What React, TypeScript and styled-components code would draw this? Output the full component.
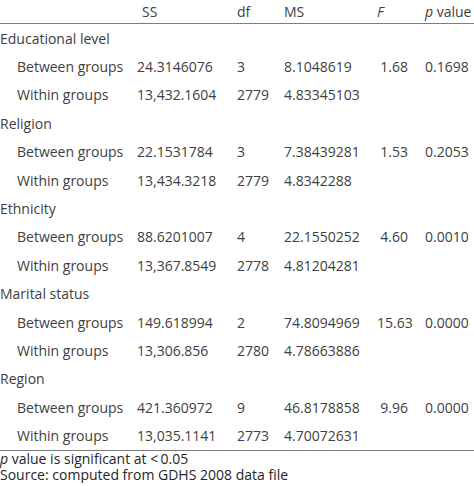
import styled, { createGlobalStyle } from 'styled-components';

const GlobalStyle = createGlobalStyle`
  html, body {
    margin: 0;
    padding: 0;
    background: #ffffff;
  }
  body {
    font-family: 'Open Sans', 'Noto Sans', sans-serif;
    color: #404040;
  }
`;

const Table = styled.div`
  width: 474px;
  font-size: 14px;
`;

const Row = styled.div<{ $head?: boolean; $last?: boolean }>`
  display: grid;
  grid-template-columns: 137px 100px 47px 93px 31px 1fr;
  align-items: center;
  height: ${(p) => (p.$head ? '23px' : '28.4px')};
  border-bottom: ${(p) => (p.$head || p.$last ? '1.5px solid #7d7d7d' : 'none')};
  white-space: nowrap;
`;

const Label = styled.div<{ $indent?: boolean }>`
  padding-left: ${(p) => (p.$indent ? '17px' : '0')};
`;

const Cell = styled.div<{ $right?: boolean; $pad?: number }>`
  text-align: ${(p) => (p.$right ? 'right' : 'left')};
  padding-left: ${(p) => p.$pad ?? 0}px;
`;

const Italic = styled.span`
  font-style: italic;
`;

const Notes = styled.div`
  font-size: 14px;
  line-height: 16px;
  color: #262626;
`;

const Note = styled.p`
  margin: 0;
  white-space: nowrap;
`;

type Group = {
  name: string;
  between: [string, string, string, string, string];
  within: [string, string, string];
};

const groups: Group[] = [
  {
    name: 'Educational level',
    between: ['24.3146076', '3', '8.1048619', '1.68', '0.1698'],
    within: ['13,432.1604', '2779', '4.83345103'],
  },
  {
    name: 'Religion',
    between: ['22.1531784', '3', '7.38439281', '1.53', '0.2053'],
    within: ['13,434.3218', '2779', '4.8342288'],
  },
  {
    name: 'Ethnicity',
    between: ['88.6201007', '4', '22.1550252', '4.60', '0.0010'],
    within: ['13,367.8549', '2778', '4.81204281'],
  },
  {
    name: 'Marital status',
    between: ['149.618994', '2', '74.8094969', '15.63', '0.0000'],
    within: ['13,306.856', '2780', '4.78663886'],
  },
  {
    name: 'Region',
    between: ['421.360972', '9', '46.8178858', '9.96', '0.0000'],
    within: ['13,035.1141', '2773', '4.70072631'],
  },
];

export default function App() {
  return (
    <>
      <GlobalStyle />
      <Table>
        <Row $head>
          <Label />
          <Cell $pad={5}>SS</Cell>
          <Cell>df</Cell>
          <Cell>MS</Cell>
          <Cell>
            <Italic>F</Italic>
          </Cell>
          <Cell $pad={17}>
            <Italic>p</Italic> value
          </Cell>
        </Row>
        {groups.map((g, i) => (
          <div key={g.name}>
            <Row>
              <Label>{g.name}</Label>
            </Row>
            <Row>
              <Label $indent>Between groups</Label>
              <Cell>{g.between[0]}</Cell>
              <Cell>{g.between[1]}</Cell>
              <Cell>{g.between[2]}</Cell>
              <Cell $right>{g.between[3]}</Cell>
              <Cell $pad={17}>{g.between[4]}</Cell>
            </Row>
            <Row $last={i === groups.length - 1}>
              <Label $indent>Within groups</Label>
              <Cell>{g.within[0]}</Cell>
              <Cell>{g.within[1]}</Cell>
              <Cell>{g.within[2]}</Cell>
            </Row>
          </div>
        ))}
        <Notes>
          <Note>
            <Italic>p</Italic> value is significant at &lt;&thinsp;0.05
          </Note>
          <Note>Source: computed from GDHS 2008 data file</Note>
        </Notes>
      </Table>
    </>
  );
}
